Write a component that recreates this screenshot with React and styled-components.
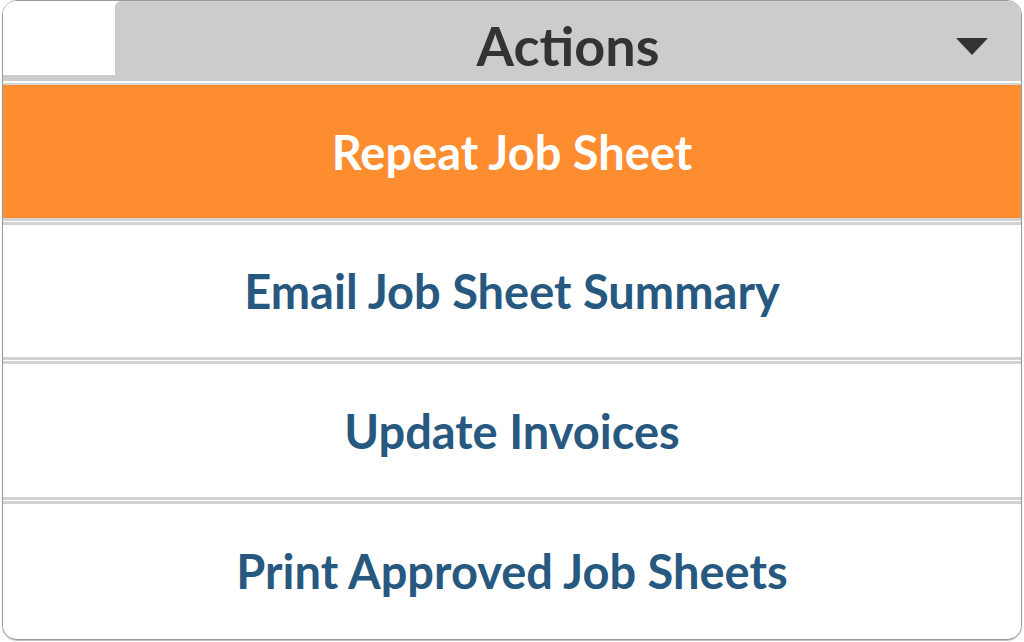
import React from "react";
import styled, { createGlobalStyle } from "styled-components";

const GlobalStyle = createGlobalStyle`
  html, body {
    margin: 0;
    padding: 0;
    background: #ffffff;
  }
  body {
    font-family: Lato, "Liberation Sans", sans-serif;
  }
`;

const Page = styled.div`
  width: 1024px;
  height: 642px;
  padding: 0 2px 0 2px;
  box-sizing: border-box;
`;

const Menu = styled.div`
  width: 1020px;
  height: 640px;
  box-sizing: border-box;
  border: 1px solid #9a9a9a;
  border-radius: 15px;
  overflow: hidden;
  background: #ffffff;
  display: flex;
  flex-direction: column;
  box-shadow: 0 1px 1px rgba(0, 0, 0, 0.25);
`;

const Header = styled.div`
  display: flex;
  flex-direction: column;
  background: #ffffff;
`;

const HeaderTop = styled.div`
  display: flex;
  height: 74px;
`;

const Tab = styled.div`
  width: 112px;
  background: #ffffff;
`;

const Title = styled.div`
  flex: 1;
  position: relative;
  background: #cccccc;
  border-radius: 6px 0 0 0;
  display: flex;
  align-items: center;
  justify-content: center;
  padding-top: 14px;
  box-sizing: border-box;
  font-size: 54px;
  font-weight: 700;
  color: #333333;
`;

const Caret = styled.svg`
  position: absolute;
  right: 33px;
  top: 37px;
`;

const HeaderStrip = styled.div`
  height: 6px;
  background: #cccccc;
  border-bottom: 2px solid #ffffff;
`;

const Item = styled.div`
  height: ${(p) => p.h}px;
  display: flex;
  align-items: center;
  justify-content: center;
  font-size: 47px;
  font-weight: 700;
  color: ${(p) => (p.active ? "#ffffff" : "#275880")};
  background: ${(p) => (p.active ? "#fd8d2f" : "#ffffff")};
  border-top: 3px solid #d2d2d2;
  border-bottom: 3px solid #d2d2d2;
  box-sizing: content-box;
  & + & {
    margin-top: 1px;
  }
  &:first-child {
    border-top-width: 2px;
  }
  &:last-child {
    border-bottom: none;
  }
`;

const Items = styled.div`
  display: flex;
  flex-direction: column;
`;

const actions = [
  { label: "Repeat Job Sheet", h: 133, active: true },
  { label: "Email Job Sheet Summary", h: 132 },
  { label: "Update Invoices", h: 133 },
  { label: "Print Approved Job Sheets", h: 133 },
];

export default function App() {
  return (
    <Page>
      <GlobalStyle />
      <Menu>
        <Header>
          <HeaderTop>
            <Tab />
            <Title>
              Actions
              <Caret width="32" height="18" viewBox="0 0 32 18">
                <path d="M0 0 H32 L16 17 Z" fill="#333333" />
              </Caret>
            </Title>
          </HeaderTop>
          <HeaderStrip />
        </Header>
        <Items>
          {actions.map((a) => (
            <Item key={a.label} h={a.h} active={a.active}>
              {a.label}
            </Item>
          ))}
        </Items>
      </Menu>
    </Page>
  );
}
